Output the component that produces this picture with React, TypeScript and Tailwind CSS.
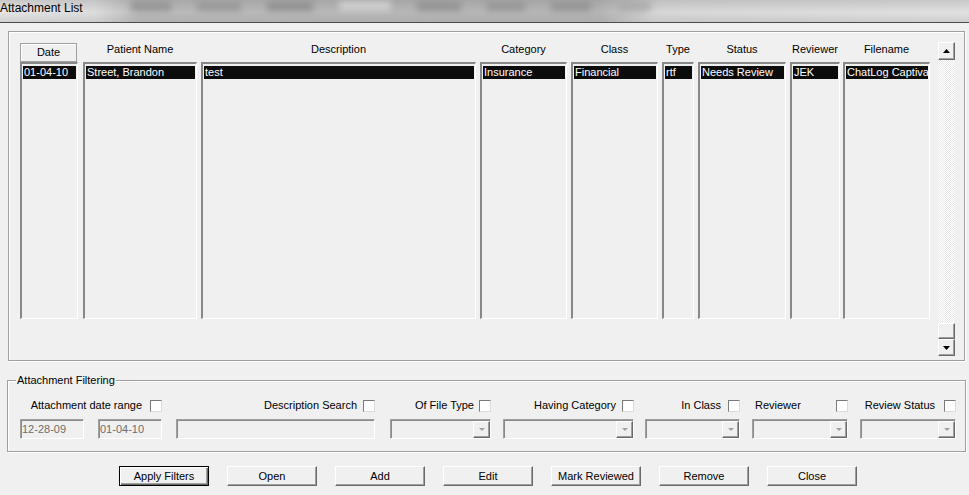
import React from "react";

const raised =
  "bg-[#f0f0f0] border border-t-white border-l-white border-r-[#696969] border-b-[#696969] shadow-[inset_-1px_-1px_0_#a0a0a0]";
const sunken =
  "border border-t-[#a0a0a0] border-l-[#a0a0a0] border-r-white border-b-white shadow-[inset_1px_1px_0_#8a8a8a]";

type ColDef = { header: string; value: string; cls: string; boxed?: boolean };

const cols: ColDef[] = [
  { header: "Date", value: "01-04-10", cls: "w-[58px]", boxed: true },
  { header: "Patient Name", value: "Street, Brandon", cls: "w-[114px] ml-[5px]" },
  { header: "Description", value: "test", cls: "w-[275px] ml-[4px]" },
  { header: "Category", value: "Insurance", cls: "w-[87px] ml-[4px]" },
  { header: "Class", value: "Financial", cls: "w-[87px] ml-[4px]" },
  { header: "Type", value: "rtf", cls: "w-[32px] ml-[4px]" },
  { header: "Status", value: "Needs Review", cls: "w-[88px] ml-[4px]" },
  { header: "Reviewer", value: "JEK", cls: "w-[50px] ml-[4px]" },
  { header: "Filename", value: "ChatLog Captiva", cls: "w-[87px] ml-[3px]" },
];

function Column({ c }: { c: ColDef }) {
  return (
    <div className={`flex flex-col mt-[1px] ${c.cls}`}>
      {c.boxed ? (
        <div className="h-[19px] flex items-start">
          <div className="w-[57px] h-[19px] border border-[#a0a0a0] shadow-[inset_1px_1px_0_#ffffff] flex items-center justify-center">
            {c.header}
          </div>
        </div>
      ) : (
        <div className="h-[19px] flex items-start justify-center pt-[0px]">
          <span className="whitespace-nowrap">{c.header}</span>
        </div>
      )}
      <div className="h-[257px] border-l-2 border-t-2 border-r border-b border-t-[#888888] border-l-[#888888] border-r-white border-b-white pt-[2px] px-[1px]">
        <div className="h-[13px] bg-[#0c0c0c] text-white leading-[13px] pl-[1px] whitespace-nowrap overflow-hidden">
          {c.value}
        </div>
      </div>
    </div>
  );
}

function Arrow({ down, color }: { down?: boolean; color: string }) {
  return (
    <svg width="7" height="4" viewBox="0 0 7 4">
      {down ? (
        <path d="M0 0H7L3.5 4Z" fill={color} />
      ) : (
        <path d="M0 4H7L3.5 0Z" fill={color} />
      )}
    </svg>
  );
}

function Scrollbar() {
  return (
    <div className="ml-[8px] w-[17px] h-[314px] flex flex-col">
      <div className={`${raised} h-[18px] flex items-center justify-center`}>
        <Arrow color="#000" />
      </div>
      <div className="h-[263px] bg-[repeating-conic-gradient(#ffffff_0%_25%,#e8e8e8_0%_50%)] bg-[length:2px_2px]" />
      <div className={`${raised} h-[16px]`} />
      <div className={`${raised} h-[17px] flex items-center justify-center`}>
        <Arrow down color="#000" />
      </div>
    </div>
  );
}

function Check() {
  return (
    <div className="w-[12px] h-[12px] shrink-0 bg-white border border-t-[#7a7a7a] border-l-[#7a7a7a] border-r-[#dcdcdc] border-b-[#dcdcdc]" />
  );
}

function Combo({ cls }: { cls: string }) {
  return (
    <div className={`${sunken} ${cls} h-[20px] bg-[#f0f0f0] flex justify-end items-start`}>
      <div className={`${raised} w-[17px] h-[17px] mt-[1px] flex items-center justify-center`}>
        <svg width="6" height="3" viewBox="0 0 6 3">
          <path d="M0 0H6L3 3Z" fill="#a0a0a0" />
        </svg>
      </div>
    </div>
  );
}

function Btn({ label, def }: { label: string; def?: boolean }) {
  return (
    <div
      className={
        def
          ? "w-[90px] h-[20px] bg-[#f0f0f0] border border-black shadow-[inset_1px_1px_0_#ffffff,inset_-1px_-1px_0_#696969,inset_-2px_-2px_0_#a0a0a0] flex items-center justify-center pt-[1px]"
          : `${raised} w-[90px] h-[20px] flex items-center justify-center pt-[1px]`
      }
    >
      {label}
    </div>
  );
}

export default function App() {
  return (
    <div className="w-[969px] h-[495px] overflow-hidden bg-[#f0f0f0] text-black text-[11px] leading-[13px] [font-family:'Liberation_Sans',Arial,sans-serif]">
      {/* title bar */}
      <div className="h-[22px] flex items-start overflow-hidden bg-[linear-gradient(to_bottom,rgba(120,120,120,0.25),rgba(200,200,200,0.05)_55%,rgba(150,150,150,0.25)),linear-gradient(to_right,#e6e6e6_0px,#dedede_95px,#b9b9b9_140px,#b4b4b4_600px,#d8d8d8_650px,#e2e2e2_969px)]">
        <span className="text-[12px] leading-[16px] whitespace-nowrap">Attachment List</span>
        <div className="ml-[48px] flex items-start gap-[26px] pt-[1px]">
          <div className="w-[40px] h-[10px] bg-[#979797] blur-[3px]" />
          <div className="w-[44px] h-[10px] bg-[#9a9a9a] blur-[3px]" />
          <div className="w-[46px] h-[10px] bg-[#939393] blur-[3px]" />
          <div className="w-[52px] h-[10px] bg-[#cdcdcd] blur-[3px]" />
          <div className="w-[44px] h-[10px] bg-[#959595] blur-[3px]" />
          <div className="w-[38px] h-[10px] bg-[#989898] blur-[3px]" />
          <div className="w-[40px] h-[10px] bg-[#969696] blur-[3px]" />
          <div className="w-[34px] h-[10px] bg-[#a8a8a8] blur-[4px]" />
        </div>
      </div>
      <div className="h-[1px] bg-[#4b4b4b]" />

      {/* main list panel */}
      <div className="ml-[8px] mt-[8px] w-[957px] h-[330px] border border-[#a0a0a0] shadow-[inset_1px_1px_0_#ffffff,1px_1px_0_#ffffff] pl-[11px] pt-[10px] flex items-start">
        {cols.map((c) => (
          <Column key={c.header} c={c} />
        ))}
        <Scrollbar />
      </div>

      {/* filtering group */}
      <div className="relative ml-[7px] mt-[19px] w-[959px] h-[72px] border border-[#a0a0a0] shadow-[inset_1px_1px_0_#ffffff,1px_1px_0_#ffffff] pl-[12px] pt-[19px]">
        <span className="absolute left-[8px] -top-[7px] px-[1px] bg-[#f0f0f0] whitespace-nowrap">
          Attachment Filtering
        </span>
        <div className="flex h-[12px] items-center whitespace-nowrap">
          <div className="w-[142px] flex items-center justify-end">
            <span className="mr-[8px] -mt-[1px]">Attachment date range</span>
            <Check />
          </div>
          <div className="ml-[14px] w-[199px] flex items-center justify-end">
            <span className="mr-[6px] -mt-[1px]">Description Search</span>
            <Check />
          </div>
          <div className="ml-[15px] w-[101px] flex items-center justify-end">
            <span className="mr-[5px] -mt-[1px]">Of File Type</span>
            <Check />
          </div>
          <div className="ml-[12px] w-[131px] flex items-center justify-end">
            <span className="mr-[6px] -mt-[1px]">Having Category</span>
            <Check />
          </div>
          <div className="ml-[11px] w-[95px] flex items-center justify-end">
            <span className="mr-[7px] -mt-[1px]">In Class</span>
            <Check />
          </div>
          <div className="ml-[12px] w-[96px] flex items-center justify-between">
            <span className="ml-[3px] -mt-[1px]">Reviewer</span>
            <Check />
          </div>
          <div className="ml-[12px] w-[96px] flex items-center justify-end">
            <span className="mr-[9px] -mt-[1px]">Review Status</span>
            <Check />
          </div>
        </div>
        <div className="flex mt-[7px]">
          <div className={`${sunken} w-[64px] h-[20px] bg-[#f0f0f0] flex items-center pl-[1px] text-[#6d6d6d]`}>
            12-28-09
          </div>
          <div className={`${sunken} ml-[14px] w-[64px] h-[20px] bg-[#f0f0f0] flex items-center pl-[1px] text-[#6d6d6d]`}>
            01-04-10
          </div>
          <div className={`${sunken} ml-[14px] w-[199px] h-[20px] bg-[#f0f0f0]`} />
          <Combo cls="ml-[15px] w-[101px]" />
          <Combo cls="ml-[12px] w-[131px]" />
          <Combo cls="ml-[11px] w-[95px]" />
          <Combo cls="ml-[12px] w-[96px]" />
          <Combo cls="ml-[12px] w-[96px]" />
        </div>
      </div>

      {/* buttons */}
      <div className="ml-[119px] mt-[14px] flex gap-[18px] whitespace-nowrap">
        <Btn label="Apply Filters" def />
        <Btn label="Open" />
        <Btn label="Add" />
        <Btn label="Edit" />
        <Btn label="Mark Reviewed" />
        <Btn label="Remove" />
        <Btn label="Close" />
      </div>
    </div>
  );
}
